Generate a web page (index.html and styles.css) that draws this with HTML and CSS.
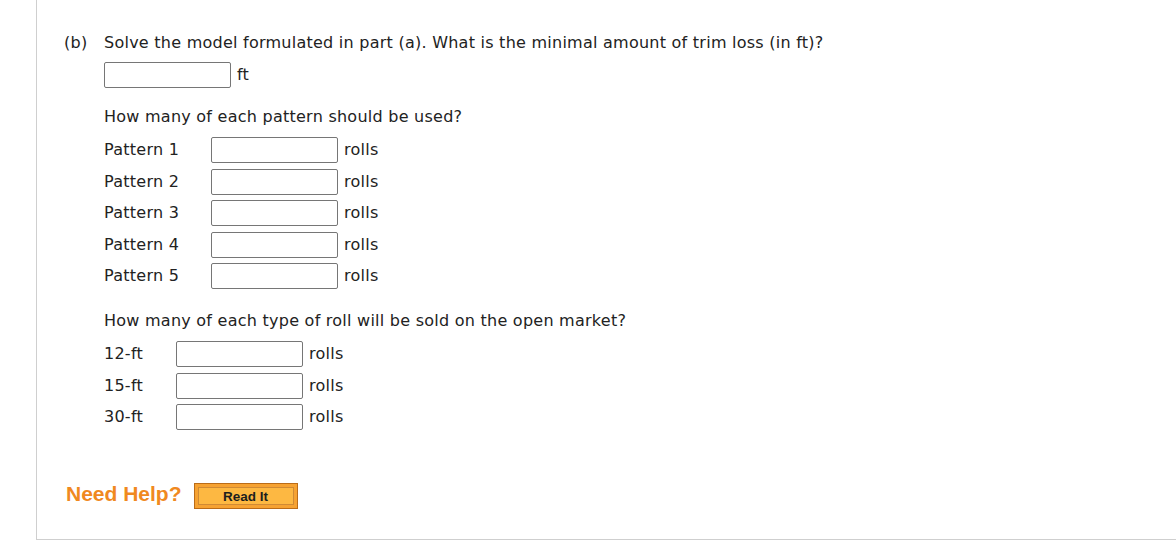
FILE: index.html
```html
<!DOCTYPE html>
<html>
<head>
<meta charset="utf-8">
<link rel="stylesheet" href="styles.css">
</head>
<body>
<div class="panel">
  <div class="part">
    <div class="part-label">(b)</div>
    <div class="part-body">
      <p class="question">Solve the model formulated in part (a). What is the minimal amount of trim loss (in ft)?</p>
      <div class="answer-line"><span class="box"></span><span class="unit">ft</span></div>

      <p class="question q2">How many of each pattern should be used?</p>
      <div class="grid patterns">
        <span class="lbl">Pattern 1</span><span class="box"></span><span class="unit">rolls</span>
        <span class="lbl">Pattern 2</span><span class="box"></span><span class="unit">rolls</span>
        <span class="lbl">Pattern 3</span><span class="box"></span><span class="unit">rolls</span>
        <span class="lbl">Pattern 4</span><span class="box"></span><span class="unit">rolls</span>
        <span class="lbl">Pattern 5</span><span class="box"></span><span class="unit">rolls</span>
      </div>

      <p class="question q3">How many of each type of roll will be sold on the open market?</p>
      <div class="grid market">
        <span class="lbl">12-ft</span><span class="box"></span><span class="unit">rolls</span>
        <span class="lbl">15-ft</span><span class="box"></span><span class="unit">rolls</span>
        <span class="lbl">30-ft</span><span class="box"></span><span class="unit">rolls</span>
      </div>
    </div>
  </div>
  <div class="help">
    <span class="need">Need Help?</span>
    <span class="read-btn"><span class="read-inner">Read It</span></span>
  </div>
</div>
</body>
</html>
```

FILE: styles.css
```css
html, body {
  margin: 0;
  padding: 0;
  background: #fff;
}
body {
  font-family: "DejaVu Sans", Verdana, sans-serif;
  font-size: 16px;
  letter-spacing: 0.25px;
  color: #222;
}
.panel {
  margin-left: 36px;
  height: 540px;
  border-left: 1px solid #cfcfcf;
  border-bottom: 1px solid #cfcfcf;
  box-sizing: border-box;
  display: flex;
  flex-direction: column;
}
.part {
  display: flex;
  padding-top: 33px;
  padding-left: 27px;
}
.part-label {
  width: 40px;
  line-height: 20px;
}
.part-body {
  display: flex;
  flex-direction: column;
}
.question {
  margin: 0;
  line-height: 20px;
}
.answer-line {
  display: flex;
  align-items: center;
  margin-top: 9px;
}
.box {
  display: inline-block;
  width: 127px;
  height: 26px;
  box-sizing: border-box;
  border: 1px solid #767676;
  border-radius: 2px;
  background: #fff;
}
.unit {
  margin-left: 6px;
  line-height: 20px;
}
.q2 {
  margin-top: 19px;
}
.grid {
  display: grid;
  align-items: center;
  row-gap: 5.5px;
}
.patterns {
  margin-top: 10px;
  grid-template-columns: 107px 127px auto;
}
.market {
  margin-top: 10px;
  grid-template-columns: 72px 127px auto;
}
.q3 {
  margin-top: 22px;
}
.lbl {
  line-height: 20px;
}
.help {
  display: flex;
  align-items: center;
  margin-top: 53px;
  padding-left: 29px;
}
.need {
  font-family: "Liberation Sans", Arial, sans-serif;
  font-weight: bold;
  font-size: 21px;
  letter-spacing: 0;
  color: #f0891f;
  margin-right: 12px;
  position: relative;
  top: -2px;
}
.read-btn {
  display: inline-flex;
  width: 104px;
  height: 26px;
  box-sizing: border-box;
  border: 1px solid #bb6c18;
  background: #f6a232;
  padding: 3px 3px;
}
.read-inner {
  flex: 1;
  border: 1px solid #cf8a35;
  background: #fdb842;
  font-family: "Liberation Sans", Arial, sans-serif;
  font-weight: bold;
  font-size: 13.5px;
  letter-spacing: 0;
  color: #1e1e1e;
  display: flex;
  align-items: center;
  justify-content: center;
}
```
